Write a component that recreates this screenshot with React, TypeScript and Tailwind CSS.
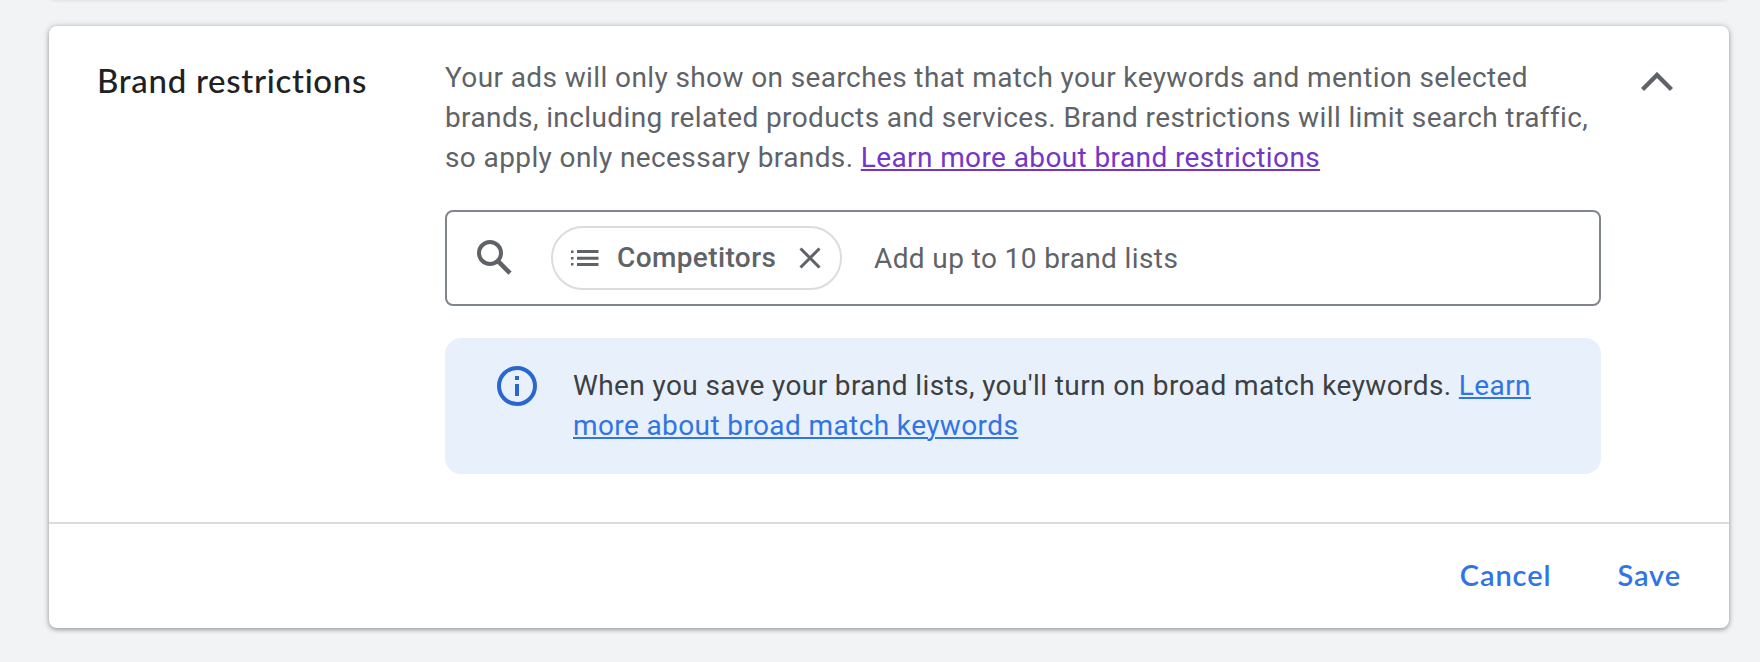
const Search = () => (
  <svg viewBox="0 0 36 36" className="h-9 w-9 shrink-0" fill="none" stroke="#5f6368" strokeWidth="4">
    <circle cx="14" cy="13" r="11" />
    <path d="M21.5 20.6 L34 33.2" strokeWidth="4.6" />
  </svg>
)

const ListIcon = () => (
  <svg viewBox="0 0 28 18" className="h-[18px] w-7 shrink-0" fill="#5f6368">
    <path d="M0 1.5h2.5v2.5H0zM0 8h2.5v2.5H0zM0 14h2.5v2.5H0zM6 1h21.5v3H6zM6 7.7h21.5v3H6zM6 14h21.5v3H6z" />
  </svg>
)

const Close = () => (
  <svg viewBox="0 0 22 22" className="h-[22px] w-[22px] shrink-0" fill="none" stroke="#5f6368" strokeWidth="3">
    <path d="M1.5 1.5 L20.5 20.5 M20.5 1.5 L1.5 20.5" />
  </svg>
)

const Info = () => (
  <svg viewBox="0 0 40 40" className="h-10 w-10 shrink-0" fill="#2a66d0">
    <circle cx="20" cy="20" r="18" fill="none" stroke="#2a66d0" strokeWidth="4" />
    <path d="M18 10h4v4h-4zM18 18h4v12h-4z" />
  </svg>
)

const Chevron = () => (
  <svg viewBox="0 0 32 20" className="h-5 w-8 shrink-0" fill="none" stroke="#5f6368" strokeWidth="4.4">
    <path d="M1.5 17.5 L16 3 L30.5 17.5" />
  </svg>
)

export default function App() {
  return (
    <div className="flex h-[662px] w-[1760px] flex-col overflow-hidden bg-[#f1f3f4] font-['Roboto',sans-serif] text-[28px] leading-10 tracking-[0.39px] text-[#5f6368]">
      <div className="mr-[31px] ml-[49px] -mt-2 h-1.5 shrink-0 rounded-b-lg bg-white shadow-[0_2px_4px_rgba(60,64,67,0.15)]" />
      <section className="mt-7 mr-[31px] ml-[49px] flex h-[602px] shrink-0 flex-col rounded-lg bg-white shadow-[0_2px_4px_rgba(60,64,67,0.35),0_0_6px_rgba(60,64,67,0.25)]">
        <div className="flex h-[496px] items-start pt-8 pl-12">
          <h2 className="w-[348px] shrink-0 pt-0.5 font-['Lato',sans-serif] text-[33px] font-medium tracking-[0.7px] whitespace-nowrap text-[#202124]">
            Brand restrictions
          </h2>
          <div className="flex w-[1156px] shrink-0 flex-col">
            <p className="whitespace-nowrap">
              Your ads will only show on searches that match your keywords and mention selected
              <br />
              brands, including related products and services. Brand restrictions will limit search traffic,
              <br />
              so apply only necessary brands.{' '}
              <a href="#" className="text-[#7535c6] underline decoration-2 underline-offset-2">Learn more about brand restrictions</a>
            </p>
            <div className="mt-8 flex h-24 items-center rounded-lg border-2 border-[#80868b] pl-[29px]">
              <Search />
              <div className="ml-[39px] flex h-16 w-[291px] shrink-0 items-center rounded-full border-2 border-[#dadce0] pl-[18px]">
                <ListIcon />
                <span className="ml-[18px] w-[163px] font-medium">Competitors</span>
                <span className="ml-[19px] flex"><Close /></span>
              </div>
              <span className="ml-8 pt-0.5">Add up to 10 brand lists</span>
            </div>
            <div className="mt-8 flex h-[136px] rounded-2xl bg-[#e8f0fc] pt-7 pl-[52px]">
              <Info />
              <p className="ml-9 whitespace-nowrap text-[#3c4043]">
                When you save your brand lists, you'll turn on broad match keywords.{' '}
                <a href="#" className="text-[#3174e4] underline decoration-2 underline-offset-2">
                  Learn
                  <br />
                  more about broad match keywords
                </a>
              </p>
            </div>
          </div>
          <span className="mt-[14px] ml-10 flex"><Chevron /></span>
        </div>
        <footer className="flex h-[106px] items-center justify-end border-t-2 border-[#dadce0] pr-12 pb-0.5 font-['Lato',sans-serif] text-[29px] font-semibold tracking-[0.9px] text-[#3174e4]">
          <button>Cancel</button>
          <button className="ml-[66px]">Save</button>
        </footer>
      </section>
    </div>
  )
}
